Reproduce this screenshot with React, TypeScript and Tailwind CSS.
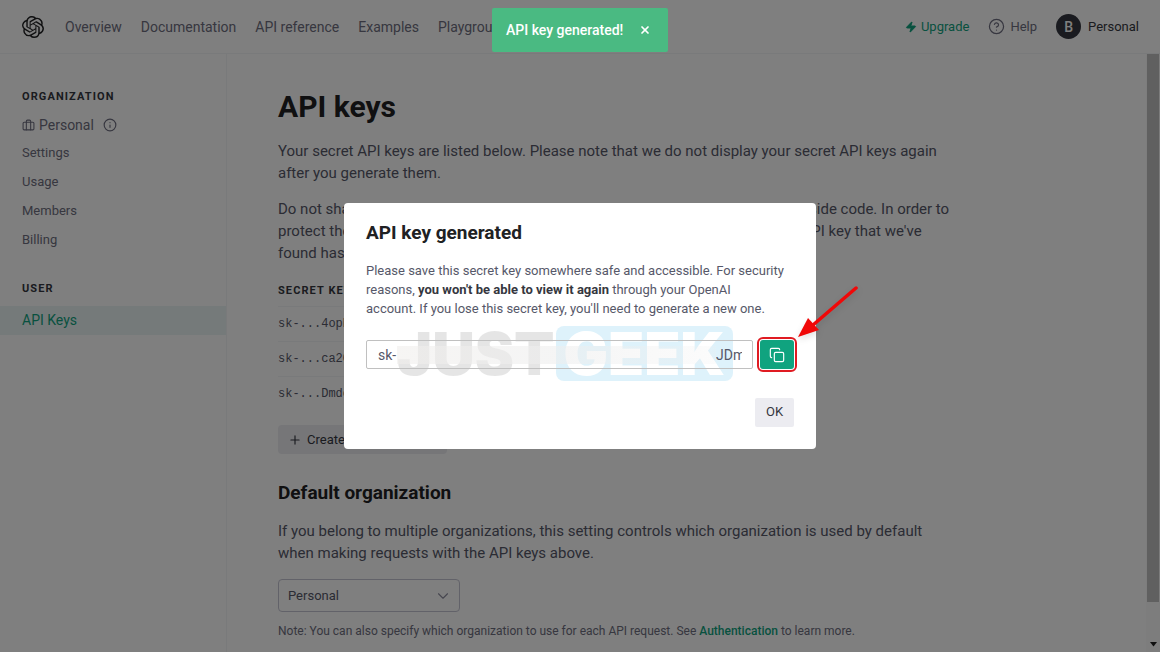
import React from "react";
import { Briefcase, ChevronDown, CircleHelp, Copy, Info, Plus, X, Zap } from "lucide-react";
import { SiOpenai } from "react-icons/si";

const navLinks = ["Overview", "Documentation", "API reference", "Examples", "Playground"];
const orgLinks = ["Settings", "Usage", "Members", "Billing"];
const secretKeys = ["sk-...4opE", "sk-...ca2C", "sk-...Dmdc"];

function Header() {
  return (
    <header className="flex h-[54px] shrink-0 items-center justify-between border-b border-gray-100 pl-[22px] pr-[21px] text-[#6e6e80]">
      <nav className="flex items-center gap-[21px] text-sm">
        <a href="#home" aria-label="Home" className="text-[#202123]">
          <SiOpenai size={22} />
        </a>
        <div className="flex gap-[19px]">
          {navLinks.map((label) => (
            <a key={label} href="#nav">
              {label}
            </a>
          ))}
        </div>
      </nav>
      <div className="flex items-center gap-[19px] text-[13px]">
        <a href="#upgrade" className="flex items-center gap-1 text-[#10a37f]">
          <Zap size={12} fill="currentColor" />
          Upgrade
        </a>
        <a href="#help" className="flex items-center gap-[5px]">
          <CircleHelp size={17} strokeWidth={1.75} />
          Help
        </a>
        <button type="button" className="flex items-center gap-[7px] text-[#353740]">
          <span className="flex size-[25px] items-center justify-center rounded-full bg-[#353740] text-sm font-medium text-white">
            B
          </span>
          Personal
        </button>
      </div>
    </header>
  );
}

function Sidebar() {
  return (
    <aside className="w-[227px] shrink-0 border-r border-gray-100 pt-[33px] text-sm text-[#6e6e80]">
      <h2 className="px-[22px] text-[11px] font-bold leading-5 tracking-widest text-[#353740]">ORGANIZATION</h2>
      <div className="mt-[5px] flex h-[26px] items-center px-[22px]">
        <Briefcase size={13} strokeWidth={2} />
        <span className="ml-1">Personal</span>
        <Info size={14} strokeWidth={2} className="ml-[9px]" />
      </div>
      <ul className="text-[13px]">
        {orgLinks.map((label) => (
          <li key={label}>
            <a href="#org" className="block px-[22px] leading-[29px]">
              {label}
            </a>
          </li>
        ))}
      </ul>
      <h2 className="mt-[25px] px-[22px] text-[11px] font-bold leading-5 tracking-widest text-[#353740]">USER</h2>
      <a href="#keys" className="mt-[7px] block bg-[#eaf4f5] px-[22px] leading-[29px] text-[#10a37f]">
        API Keys
      </a>
    </aside>
  );
}

function KeysPage() {
  return (
    <main className="min-w-0 flex-1 pl-[51px] pt-[35px] text-[#565869]">
      <h1 className="text-[30px] font-bold leading-9 text-[#202123]">API keys</h1>
      <div className="max-w-[680px] text-[15px] leading-[22px]">
        <p className="mt-[15px]">
          Your secret API keys are listed below. Please note that we do not display your secret API keys again after
          you generate them.
        </p>
        <p className="mt-[14px]">
          Do not share your API key with others, or expose it in the browser or other client-side code. In order to
          protect the security of your account, OpenAI may also automatically rotate any API key that we've found has
          leaked publicly.
        </p>
      </div>
      <table className="mt-[13px] w-[500px] text-left">
        <thead>
          <tr className="h-[29px] border-b border-gray-100 text-[11px] tracking-widest text-[#353740]">
            <th className="font-bold">SECRET KEY</th>
            <th className="font-bold">CREATED</th>
            <th className="font-bold">LAST USED</th>
          </tr>
        </thead>
        <tbody>
          {secretKeys.map((key) => (
            <tr
              key={key}
              className="h-[35px] border-b border-gray-100 font-['Liberation_Mono',monospace] text-xs last:border-0"
            >
              <td colSpan={3}>{key}</td>
            </tr>
          ))}
        </tbody>
      </table>
      <button
        type="button"
        className="mt-[14px] flex h-[29px] w-[169px] items-center gap-[5px] whitespace-nowrap rounded-sm bg-[#ececf1] pl-[10px] text-[13px] text-[#353740]"
      >
        <Plus size={14} />
        Create new secret key
      </button>
      <h2 className="mt-[26px] text-[19px] font-bold leading-[26px] text-[#202123]">Default organization</h2>
      <p className="mt-[14px] max-w-[680px] text-[15px] leading-[22px]">
        If you belong to multiple organizations, this setting controls which organization is used by default when
        making requests with the API keys above.
      </p>
      <div className="relative mt-[15px] w-[182px]">
        <select
          aria-label="Default organization"
          className="h-[33px] w-full appearance-none rounded-sm border border-[#c5c5d2] bg-white pl-[9px] text-[13px]"
        >
          <option>Personal</option>
        </select>
        <ChevronDown
          size={18}
          strokeWidth={1.5}
          className="pointer-events-none absolute right-2 top-2 text-[#8e8ea0]"
        />
      </div>
      <p className="mt-[9px] text-xs leading-5 text-[#6e6e80]">
        Note: You can also specify which organization to use for each API request. See{" "}
        <a href="#authentication" className="font-medium text-[#10a37f]">
          Authentication
        </a>{" "}
        to learn more.
      </p>
    </main>
  );
}

function Scrollbar() {
  return (
    <div aria-hidden="true" className="flex w-[14px] shrink-0 flex-col items-center justify-between bg-[#fafafa] pb-[5px]">
      <span className="h-[548px] w-3 bg-[#c1c1c1]" />
      <svg width="7" height="5" viewBox="0 0 7 5" fill="#202020">
        <path d="M0 0h7L3.5 4.5z" />
      </svg>
    </div>
  );
}

function Watermark() {
  return (
    <div
      aria-hidden="true"
      className="pointer-events-none absolute left-[53px] top-[123px] flex h-[55px] items-center font-['Inter',sans-serif] text-[59px] font-black leading-none"
    >
      <span className="text-black/10">JUST</span>
      <span className="ml-px flex h-full items-center rounded-lg bg-[#def2fb] px-2 text-white">GEEK</span>
    </div>
  );
}

function Arrow() {
  return (
    <svg
      aria-hidden="true"
      width="66"
      height="58"
      viewBox="0 0 66 58"
      className="pointer-events-none absolute left-[451px] top-[80px] drop-shadow-md"
    >
      <path d="M61 5 18 42" stroke="#f00808" strokeWidth="3.5" strokeLinecap="round" />
      <path d="M3 54 13 35 24 47z" fill="#f00808" />
    </svg>
  );
}

function KeyDialog() {
  return (
    <section
      role="dialog"
      aria-label="API key generated"
      className="relative w-[472px] rounded-[4px] bg-white px-[22px] pb-[22px] pt-[18px] text-sm text-[#353740]"
    >
      <Watermark />
      <h2 className="text-[19px] font-bold leading-6 text-[#202123]">API key generated</h2>
      <p className="mt-4 text-[13px] leading-[19px] text-[#565869]">
        Please save this secret key somewhere safe and accessible. For security reasons,{" "}
        <strong className="text-[#353740]">you won't be able to view it again</strong> through your OpenAI
        <br />
        account. If you lose this secret key, you'll need to generate a new one.
      </p>
      <div className="relative mt-[22px] flex gap-[7px]">
        <div className="flex h-[29px] min-w-0 flex-1 items-center rounded-xs border border-[#c0c0c0] pl-[11px] pr-[10px]">
          <input aria-label="Secret key" readOnly value="sk-" className="w-[19px] text-[#565869] outline-none" />
          <span className="h-[18px] flex-1 bg-linear-to-r from-[#f0eeec]/60 via-[#eeeeee]/60 to-[#eeeeee]/20" />
          <input
            aria-label="End of secret key"
            readOnly
            value="JDm"
            className="w-[26px] text-[#565869] outline-none"
          />
        </div>
        <button
          type="button"
          aria-label="Copy key"
          className="flex h-[29px] w-[34px] items-center justify-center rounded-[3px] bg-[#10a37f] text-white outline-2 outline-offset-1 outline-[#e01b22]"
        >
          <Copy size={16} strokeWidth={1.75} />
        </button>
      </div>
      <div className="mt-[29px] flex justify-end">
        <button type="button" className="h-[29px] w-[39px] rounded-xs bg-[#ececf1] text-[13px]">
          OK
        </button>
      </div>
      <Arrow />
    </section>
  );
}

export default function App() {
  return (
    <div className="relative flex h-screen flex-col overflow-hidden bg-white font-['Roboto',sans-serif]">
      <Header />
      <div className="flex min-h-0 flex-1">
        <Sidebar />
        <KeysPage />
        <Scrollbar />
      </div>
      <div className="absolute inset-0 flex items-center justify-center bg-black/50">
        <KeyDialog />
      </div>
      <div
        role="status"
        className="absolute left-1/2 top-2 flex h-[44px] w-[176px] -translate-x-1/2 items-center justify-between rounded-xs bg-[#4aba82] pl-[14px] pr-[17px] text-sm font-medium text-white"
      >
        API key generated!
        <button type="button" aria-label="Dismiss">
          <X size={12} strokeWidth={3.5} />
        </button>
      </div>
    </div>
  );
}
